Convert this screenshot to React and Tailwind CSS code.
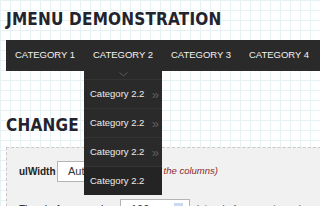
import React from 'react';

const categories = ['CATEGORY 1', 'CATEGORY 2', 'CATEGORY 3', 'CATEGORY 4'];
const subItems = ['Category 2.2', 'Category 2.2', 'Category 2.2', 'Category 2.2'];

function Dropdown() {
    return (
        <div className="absolute left-0 top-full w-full bg-[#2b2a2a] z-10">
            {/* little down caret under the active item */}
            <div className="h-[8px] flex justify-center items-start">
                <svg width="9" height="5" viewBox="0 0 9 5" className="mt-[1px]">
                    <path d="M0.5 0.5 L4.5 4 L8.5 0.5" fill="none" stroke="#5a5a5a" strokeWidth="1" />
                </svg>
            </div>
            {subItems.map((label, i) => (
                <div
                    key={i}
                    className={`h-[29px] flex items-center justify-between pl-[6px] pr-[3px] border-t border-[#353434] ${i === 3 ? 'bg-[#252424]' : ''}`}
                >
                    <span className="text-[9.5px] text-[#ececec]">{label}</span>
                    {i < 3 && <span className="text-[13px] text-[#5f5f5f] leading-none">»</span>}
                </div>
            ))}
        </div>
    );
}

export default function App() {
    return (
        <div
            className="w-[320px] h-[206px] overflow-hidden bg-white bg-[linear-gradient(to_right,#e6f1f3_1px,transparent_1px),linear-gradient(to_bottom,#e6f1f3_1px,transparent_1px)] bg-[size:10px_10px]"
            style={{ fontFamily: '"Liberation Sans", Arial, sans-serif' }}
        >
            <h1
                className="pt-[9px] pl-[6px] leading-[20px] text-[17px] font-bold tracking-[0.2px] text-[#23232e] whitespace-nowrap"
                style={{ fontFamily: '"DejaVu Sans Condensed", "DejaVu Sans", sans-serif' }}
            >
                JMENU DEMONSTRATION
            </h1>

            {/* Menu bar */}
            <nav className="mt-[11px] ml-[6px] h-[31px] bg-[#2b2a2a] flex items-stretch">
                {categories.map((cat, i) => (
                    <div key={cat} className="relative w-[78px] flex items-center justify-center shrink-0">
                        <span className="text-[9.5px] text-[#f2f2f2] whitespace-nowrap">{cat}</span>
                        {i === 1 && <Dropdown />}
                    </div>
                ))}
            </nav>

            <h2
                className="mt-[44px] pl-[6px] leading-[20px] text-[17px] font-bold tracking-[0.2px] text-[#23232e] whitespace-nowrap"
                style={{ fontFamily: '"DejaVu Sans Condensed", "DejaVu Sans", sans-serif' }}
            >
                CHANGE OPTIONS
            </h2>

            {/* Options box */}
            <div className="mt-[12px] ml-[6px] w-[330px] h-[80px] border border-dashed border-[#c9c9c9] bg-[#f1f1f1] pt-[13px] pl-[12px] flex flex-col gap-[17px]">
                <div className="flex items-center h-[21px]">
                    <span className="text-[10px] font-bold text-[#222] w-[38px]">ulWidth</span>
                    <div className="w-[62px] h-[21px] bg-white border border-[#b5b5b5] flex items-center pl-[10px] text-[11px] text-[#333]">
                        Auto
                    </div>
                    <span className="ml-[4px] text-[9.5px] italic text-[#8b2a2a] whitespace-nowrap">(Width of the columns)</span>
                </div>
                <div className="flex items-center h-[21px]">
                    <span className="text-[10.5px] text-[#222] w-[101px] whitespace-nowrap">Time before opening</span>
                    <div className="w-[70px] h-[21px] bg-white border border-[#b5b5b5] flex items-center justify-between pl-[10px] pr-[6px] text-[11px] text-[#333]">
                        <span>100</span>
                        <span className="w-[9px] h-[14px] bg-[#c9daf0]" />
                    </div>
                    <span className="ml-[5px] text-[9.5px] italic text-[#8b2a2a] whitespace-nowrap">(Time before opening submenus)</span>
                </div>
            </div>
        </div>
    );
}
